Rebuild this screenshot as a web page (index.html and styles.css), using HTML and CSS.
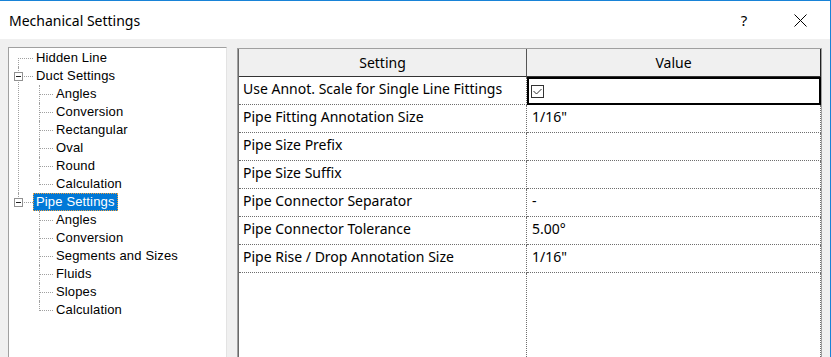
FILE: index.html
```
<!DOCTYPE html>
<html>
<head>
    <meta charset="UTF-8">
    <meta name="viewport" content="width=device-width, initial-scale=1.0">
    <title>Mechanical Settings</title>
    <link rel="stylesheet" href="styles.css">
</head>
<body>
    <div class="dialog">
        <div class="titlebar">
            <span class="title">Mechanical Settings</span>
            <span class="help">?</span>
            <span class="close">
                <svg width="13" height="13" viewBox="0 0 13 13">
                    <path d="M0.5 0.5 L12.5 12.5 M12.5 0.5 L0.5 12.5" stroke="#000" stroke-width="1" fill="none"/>
                </svg>
            </span>
        </div>

        <div class="content">
            <div class="tree-panel">
                <ul class="tree">
                    <li><span class="node">Hidden Line</span></li>
                    <li>
                        <span class="toggle"></span><span class="node">Duct Settings</span>
                        <ul>
                            <li><span class="node">Angles</span></li>
                            <li><span class="node">Conversion</span></li>
                            <li><span class="node">Rectangular</span></li>
                            <li><span class="node">Oval</span></li>
                            <li><span class="node">Round</span></li>
                            <li><span class="node">Calculation</span></li>
                        </ul>
                    </li>
                    <li>
                        <span class="toggle"></span><span class="node selected">Pipe Settings</span>
                        <ul>
                            <li><span class="node">Angles</span></li>
                            <li><span class="node">Conversion</span></li>
                            <li><span class="node">Segments and Sizes</span></li>
                            <li><span class="node">Fluids</span></li>
                            <li><span class="node">Slopes</span></li>
                            <li><span class="node">Calculation</span></li>
                        </ul>
                    </li>
                </ul>
            </div>

            <div class="grid">
                <div class="table">
                    <div class="head">
                        <div class="cell">Setting</div>
                        <div class="cell">Value</div>
                    </div>
                    <div class="row">
                        <div class="cell">Use Annot. Scale for Single Line Fittings</div>
                        <div class="cell value focused">
                            <span class="checkbox">
                                <svg width="11" height="11" viewBox="0 0 11 11">
                                    <path d="M1.5 5 L4.5 8 L9.5 3" stroke="#333" stroke-width="1" fill="none"/>
                                </svg>
                            </span>
                        </div>
                    </div>
                    <div class="row">
                        <div class="cell">Pipe Fitting Annotation Size</div>
                        <div class="cell value">1/16"</div>
                    </div>
                    <div class="row">
                        <div class="cell">Pipe Size Prefix</div>
                        <div class="cell value"></div>
                    </div>
                    <div class="row">
                        <div class="cell">Pipe Size Suffix</div>
                        <div class="cell value"></div>
                    </div>
                    <div class="row">
                        <div class="cell">Pipe Connector Separator</div>
                        <div class="cell value">-</div>
                    </div>
                    <div class="row">
                        <div class="cell">Pipe Connector Tolerance</div>
                        <div class="cell value">5.00°</div>
                    </div>
                    <div class="row">
                        <div class="cell">Pipe Rise / Drop Annotation Size</div>
                        <div class="cell value">1/16"</div>
                    </div>
                    <div class="row filler">
                        <div class="cell"></div>
                        <div class="cell value"></div>
                    </div>
                </div>
            </div>
        </div>
    </div>
</body>
</html>
```

FILE: styles.css
```
* {
    margin: 0;
    padding: 0;
    box-sizing: border-box;
}

body {
    width: 831px;
    height: 357px;
    overflow: hidden;
    background: #f0f0f0;
    font-family: "Noto Sans", sans-serif;
    color: #000;
}

.dialog {
    height: 357px;
    border-top: 1px solid #1883d7;
    border-right: 1px solid #1883d7;
    background: #f0f0f0;
    overflow: hidden;
}

.titlebar {
    height: 38px;
    background: #fff;
    display: flex;
    align-items: center;
    padding: 0 7px 0 9px;
}

.title {
    flex: 1;
    font-size: 14px;
}

.help {
    width: 46px;
    text-align: center;
    font-size: 15px;
    margin-right: 10px;
}

.close {
    width: 46px;
    display: flex;
    justify-content: center;
}

.content {
    display: flex;
    align-items: flex-start;
    gap: 10px;
    padding: 8px 0 0 8px;
}

/* tree */

.tree-panel {
    width: 219px;
    height: 330px;
    background: #fff;
    border: 1px solid;
    border-color: #a0a0a0 #e3e3e3 #e3e3e3 #a0a0a0;
    padding-top: 1px;
}

.tree {
    list-style: none;
    font-family: "Liberation Sans", Arial, sans-serif;
    font-size: 13px;
}

.tree ul {
    list-style: none;
    margin-left: 6px;
}

.tree li {
    position: relative;
    padding-left: 24px;
}

.tree li li {
    padding-left: 14px;
}

.tree li::before {
    content: "";
    position: absolute;
    left: 9px;
    top: 9px;
    width: 15px;
    border-top: 1px dotted #a0a0a0;
}

.tree li::after {
    content: "";
    position: absolute;
    left: 9px;
    top: 0;
    bottom: 0;
    border-left: 1px dotted #a0a0a0;
}

.tree li li::before {
    left: 0;
    width: 14px;
}

.tree li li::after {
    left: 0;
}

.tree > li:first-child::after {
    top: 9px;
}

.tree li:last-child::after {
    bottom: auto;
    height: 10px;
}

.node {
    display: inline-block;
    vertical-align: top;
    line-height: 16px;
    padding: 0 2px;
    border: 1px solid transparent;
    letter-spacing: 0.15px;
}

.node.selected {
    background: #0078d7;
    color: #fff;
    border: 1px dotted #f0a040;
}

.toggle {
    position: absolute;
    left: 5px;
    top: 5px;
    width: 9px;
    height: 9px;
    border: 1px solid #919191;
    background: #fff;
    z-index: 1;
}

.toggle::after {
    content: "";
    position: absolute;
    left: 1px;
    top: 3px;
    width: 5px;
    height: 1px;
    background: #222;
}

/* property grid */

.grid {
    width: 585px;
    height: 320px;
    margin-top: 1px;
    background: #fff;
    border: 1px solid #a0a0a0;
    font-size: 14px;
}

.table {
    height: 100%;
    border-left: 1px solid #696969;
    display: flex;
    flex-direction: column;
}

.head,
.row {
    display: grid;
    grid-template-columns: 288px 1fr;
}

.head .cell {
    height: 28px;
    line-height: 27px;
    background: #f0f0f0;
    text-align: center;
    border-right: 1px solid #555;
    border-bottom: 1px solid #333;
}

.head .cell:last-child {
    border-right: 1px solid #222;
}

.row .cell {
    height: 28px;
    line-height: 23px;
    padding-left: 4px;
    border-right: 1px dotted #6e6e6e;
    border-bottom: 1px dotted #6e6e6e;
    white-space: nowrap;
}

.row .cell.value {
    padding-left: 5px;
}

.focused {
    outline: 2px solid #000;
    outline-offset: -2px;
}

.checkbox {
    display: block;
    width: 13px;
    height: 13px;
    margin: 8px 0 0 -1px;
    border: 1px solid #333;
    background: #fff;
}

.checkbox svg {
    display: block;
}

.row.filler {
    flex: 1;
}

.row.filler .cell {
    height: auto;
    border-bottom: none;
}
```
